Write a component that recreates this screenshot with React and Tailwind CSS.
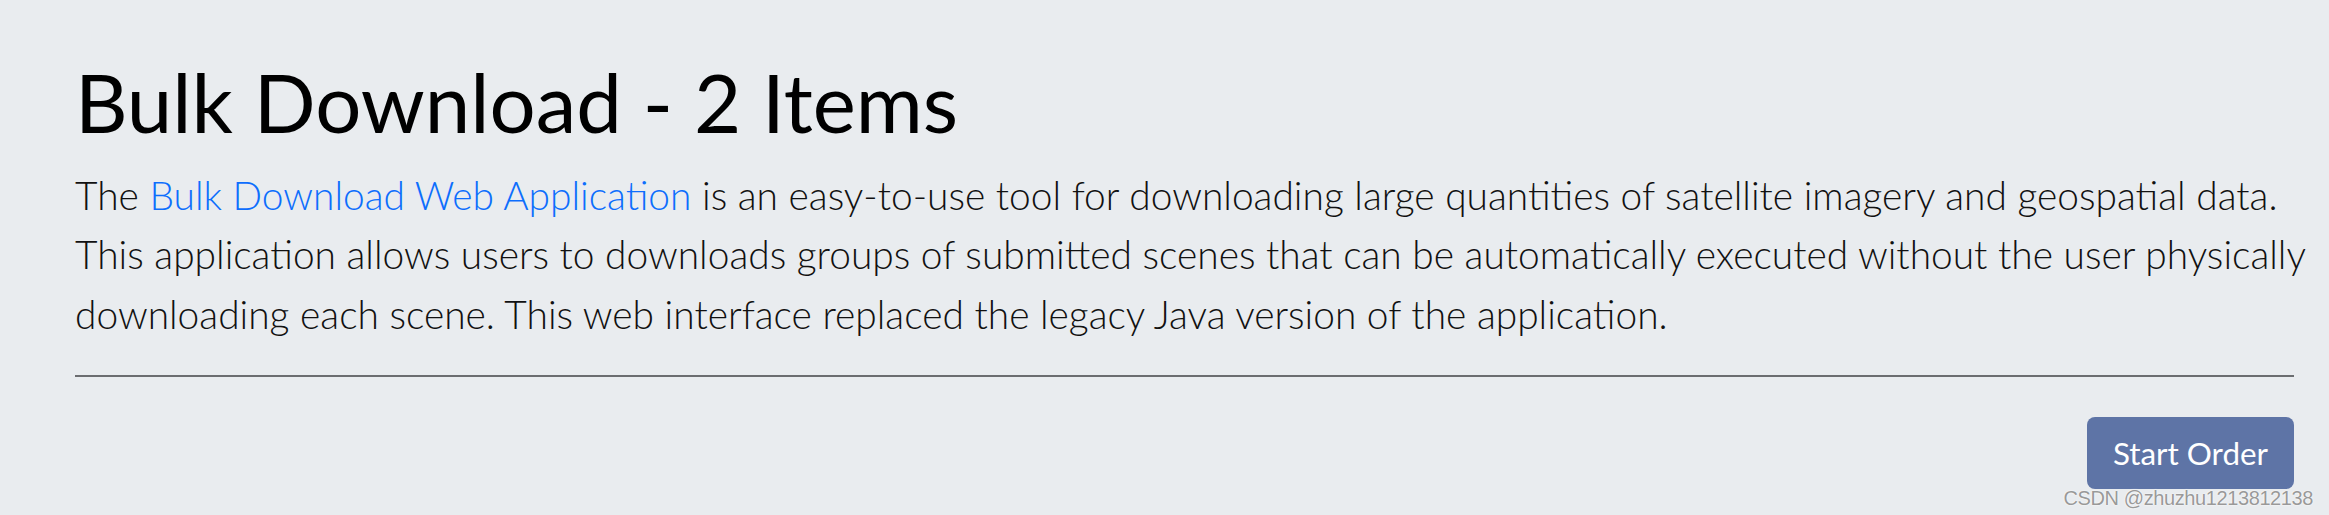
import React from "react";

const App = () => {
    const itemCount = 2;

    return (
        <div className="relative min-h-[515px] w-full bg-[#e9ecef] font-['Lato','Noto_Sans',sans-serif] text-[#111]">
            <div className="flex flex-col pl-[75px] pr-[35px] pt-[53px]">
                <h1 className="text-[81.5px] leading-[1.2] font-normal text-black">
                    Bulk Download - {itemCount} Items
                </h1>

                <p className="mt-[15px] text-[38.9px] leading-[59.5px] font-light whitespace-nowrap">
                    The <a href="#" className="text-[#0d6efd]">Bulk Download Web Application</a> is an easy-to-use tool for downloading large quantities of satellite imagery and geospatial data.
                    <br />
                    This application allows users to downloads groups of submitted scenes that can be automatically executed without the user physically
                    <br />
                    downloading each scene. This web interface replaced the legacy Java version of the application.
                </p>

                <hr className="mt-[31px] border-0 border-t-2 border-[#6b6d70]" />

                <div className="flex justify-end mt-[40px]">
                    <button
                        type="button"
                        className="h-[72px] px-[26px] rounded-[8px] bg-[#5e74a6] text-white text-[31.4px] leading-none"
                    >
                        Start Order
                    </button>
                </div>
            </div>

            {/* watermark from the screenshot */}
            <div className="absolute right-[16px] bottom-[7px] font-['Liberation_Sans',Arial,sans-serif] text-[20px] tracking-[-0.4px] leading-none text-[#999] [text-shadow:0_0_2px_#fff,0_0_1px_#fff]">
                CSDN @zhuzhu1213812138
            </div>
        </div>
    );
};

export default App;
